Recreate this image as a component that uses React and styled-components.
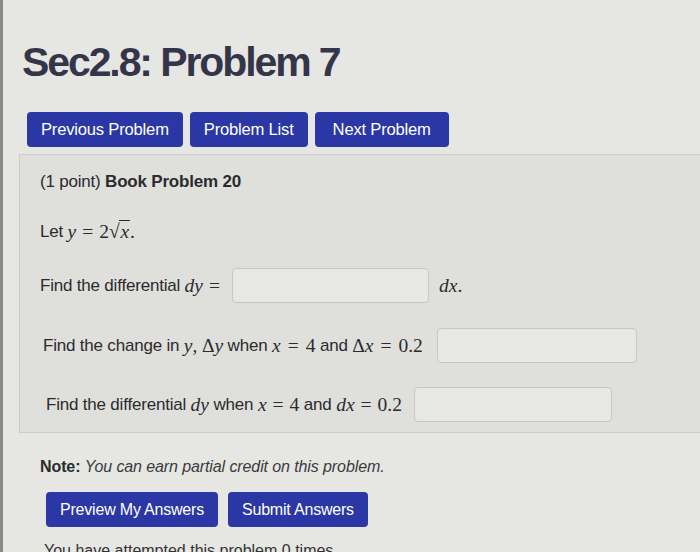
import React from 'react'
import styled, { createGlobalStyle } from 'styled-components'

const Global = createGlobalStyle`
  html, body {
    margin: 0;
    padding: 0;
    background: #e6e6e3;
  }
  body {
    font-family: "Liberation Sans", Arial, sans-serif;
    color: #2b2b2e;
  }
`

const Page = styled.div`
  width: 700px;
  height: 552px;
  overflow: hidden;
  box-sizing: border-box;
  border-left: 3px solid #8a8a88;
  padding-left: 19px;
  padding-top: 38px;
`

const Title = styled.h1`
  margin: 0;
  font-size: 41px;
  line-height: 49px;
  font-weight: 700;
  letter-spacing: -2.1px;
  color: #35354a;
`

const ButtonRow = styled.div`
  display: flex;
  gap: ${p => p.gap || 6}px;
  margin-top: ${p => p.top}px;
  padding-left: ${p => p.indent || 0}px;
  align-items: center;
`

const Button = styled.button`
  height: 35px;
  padding: 0 ${p => p.pad || 13}px;
  border: none;
  border-radius: 4px;
  background: #2a37a4;
  color: #fff;
  font-family: "Liberation Sans", Arial, sans-serif;
  font-size: ${p => p.size || 16.6}px;
  letter-spacing: -0.2px;
  cursor: pointer;
`

const Box = styled.div`
  margin-top: 7px;
  margin-left: -3px;
  margin-right: -4px;
  background: #dfdfdc;
  border: 1px solid #cbcbc8;
  border-right: none;
  padding: 17px 0 10px 20px;
  display: flex;
  flex-direction: column;
`

const Row = styled.div`
  display: flex;
  align-items: center;
  margin-top: ${p => p.top || 0}px;
  padding-left: ${p => p.indent || 0}px;
  min-height: 20px;
  font-size: 17px;
  letter-spacing: -0.2px;
  white-space: nowrap;
`

const M = styled.span`
  font-family: "Liberation Serif", "Times New Roman", serif;
  font-size: 19.5px;
  font-style: ${p => (p.up ? 'normal' : 'italic')};
  letter-spacing: 0;
  margin: 0 ${p => p.gap || 0}px;
`

const Sqrt = styled.span`
  font-family: "Liberation Serif", "Times New Roman", serif;
  font-size: 19.5px;
  font-style: normal;
  span {
    font-style: italic;
    border-top: 1px solid #2b2b2e;
    padding: 0 1px;
  }
`

const Input = styled.div`
  width: ${p => p.w || 196}px;
  height: 35px;
  flex-shrink: 0;
  box-sizing: border-box;
  margin-left: ${p => p.left || 10}px;
  border: 1px solid #c6c6c4;
  border-radius: 4px;
  background: #e7e7e5;
`

const Note = styled.p`
  margin: 24px 0 0 18px;
  font-size: 16px;
  line-height: 20px;
  letter-spacing: -0.1px;
  b { font-weight: 700; }
  i { color: #3a3a3e; }
`

const Footer = styled.p`
  margin: 15px 0 0 22px;
  font-size: 16px;
  color: #333;
`

export default function App() {
  return (
    <>
      <Global />
      <Page>
        <Title>Sec2.8: Problem 7</Title>
        <ButtonRow top={25} indent={5} gap={7}>
          <Button pad={14}>Previous Problem</Button>
          <Button pad={14}>Problem List</Button>
          <Button pad={18}>Next Problem</Button>
        </ButtonRow>
        <Box>
          <Row>
            (1 point)&nbsp;<b>Book Problem 20</b>
          </Row>
          <Row top={29}>
            Let&nbsp;<M>y</M><M up gap={6}>=</M><M up>2</M>
            <Sqrt>√<span>x</span></Sqrt><M up>.</M>
          </Row>
          <Row top={25}>
            Find the differential&nbsp;<M>dy</M><M up gap={6}>=</M>
            <Input left={6} w={197} />
            <M gap={10}>dx</M>
            <M up style={{ marginLeft: -10 }}>.</M>
          </Row>
          <Row top={25} indent={3}>
            Find the change in&nbsp;<M>y</M><M up>,</M>&nbsp;<M up>Δ</M><M>y</M>
            &nbsp;when&nbsp;<M>x</M><M up gap={7}>=</M><M up>4</M>&nbsp;and&nbsp;
            <M up>Δ</M><M>x</M><M up gap={7}>=</M><M up>0.2</M>
            <Input left={14} w={200} />
          </Row>
          <Row top={24} indent={6}>
            Find the differential&nbsp;<M>dy</M>&nbsp;when&nbsp;<M>x</M>
            <M up gap={6}>=</M><M up>4</M>&nbsp;and&nbsp;<M>dx</M>
            <M up gap={6}>=</M><M up>0.2</M>
            <Input left={12} w={198} />
          </Row>
        </Box>
        <Note>
          <b>Note:</b> <i>You can earn partial credit on this problem.</i>
        </Note>
        <ButtonRow top={15} gap={10} indent={24}>
          <Button pad={14} size={16}>Preview My Answers</Button>
          <Button pad={14} size={16}>Submit Answers</Button>
        </ButtonRow>
        <Footer>You have attempted this problem 0 times.</Footer>
      </Page>
    </>
  )
}
